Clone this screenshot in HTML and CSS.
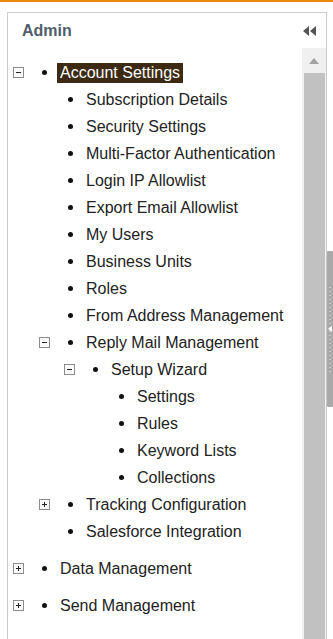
FILE: index.html
```html
<!DOCTYPE html>
<html lang="en">

<head>
    <meta charset="UTF-8">
    <meta name="viewport" content="width=device-width, initial-scale=1.0">
    <title>Admin</title>
    <link rel="stylesheet" href="styles.css">
</head>

<body>

    <div class="layout">
        <div class="panel">
            <div class="panel-header">
                <span class="panel-title">Admin</span>
                <svg class="collapse-icon" width="14" height="10" viewBox="0 0 14 10">
                    <polygon points="0,5 6,0 6,10" fill="#555"/>
                    <polygon points="7,5 13,0 13,10" fill="#555"/>
                </svg>
            </div>

            <div class="panel-body">
                <ul class="tree">
                    <li class="top">
                        <div class="row"><span class="slot"><span class="toggle minus"></span></span><span class="dot"></span><span class="label selected">Account Settings</span></div>
                        <ul>
                            <li><div class="row"><span class="slot"></span><span class="dot"></span><span class="label">Subscription Details</span></div></li>
                            <li><div class="row"><span class="slot"></span><span class="dot"></span><span class="label">Security Settings</span></div></li>
                            <li><div class="row"><span class="slot"></span><span class="dot"></span><span class="label">Multi-Factor Authentication</span></div></li>
                            <li><div class="row"><span class="slot"></span><span class="dot"></span><span class="label">Login IP Allowlist</span></div></li>
                            <li><div class="row"><span class="slot"></span><span class="dot"></span><span class="label">Export Email Allowlist</span></div></li>
                            <li><div class="row"><span class="slot"></span><span class="dot"></span><span class="label">My Users</span></div></li>
                            <li><div class="row"><span class="slot"></span><span class="dot"></span><span class="label">Business Units</span></div></li>
                            <li><div class="row"><span class="slot"></span><span class="dot"></span><span class="label">Roles</span></div></li>
                            <li><div class="row"><span class="slot"></span><span class="dot"></span><span class="label">From Address Management</span></div></li>
                            <li>
                                <div class="row"><span class="slot"><span class="toggle minus"></span></span><span class="dot"></span><span class="label">Reply Mail Management</span></div>
                                <ul>
                                    <li>
                                        <div class="row"><span class="slot"><span class="toggle minus"></span></span><span class="dot"></span><span class="label">Setup Wizard</span></div>
                                        <ul>
                                            <li><div class="row"><span class="slot"></span><span class="dot"></span><span class="label">Settings</span></div></li>
                                            <li><div class="row"><span class="slot"></span><span class="dot"></span><span class="label">Rules</span></div></li>
                                            <li><div class="row"><span class="slot"></span><span class="dot"></span><span class="label">Keyword Lists</span></div></li>
                                            <li><div class="row"><span class="slot"></span><span class="dot"></span><span class="label">Collections</span></div></li>
                                        </ul>
                                    </li>
                                </ul>
                            </li>
                            <li><div class="row"><span class="slot"><span class="toggle plus"></span></span><span class="dot"></span><span class="label">Tracking Configuration</span></div></li>
                            <li><div class="row"><span class="slot"></span><span class="dot"></span><span class="label">Salesforce Integration</span></div></li>
                        </ul>
                    </li>
                    <li class="top">
                        <div class="row"><span class="slot"><span class="toggle plus"></span></span><span class="dot"></span><span class="label">Data Management</span></div>
                    </li>
                    <li class="top">
                        <div class="row"><span class="slot"><span class="toggle plus"></span></span><span class="dot"></span><span class="label">Send Management</span></div>
                    </li>
                </ul>

                <div class="scrollbar">
                    <div class="scroll-up">
                        <svg width="10" height="6" viewBox="0 0 10 6"><polygon points="5,0 10,6 0,6" fill="#a3a3a3"/></svg>
                    </div>
                    <div class="scroll-thumb"></div>
                </div>
            </div>
        </div>

        <div class="splitter">
            <div class="splitter-handle">
                <span class="splitter-arrow"></span>
            </div>
        </div>
    </div>

</body>

</html>
```

FILE: styles.css
```css
html,
body {
    height: 100%;
}

body {
    margin: 0;
    overflow: hidden;
    background-color: #ffffff;
    border-top: 2px solid #e8880c;
    box-sizing: border-box;
    font-family: 'Liberation Sans', Arial, sans-serif;
    color: #222;
}

.layout {
    display: flex;
    height: calc(100% - 10px);
    margin-top: 10px;
    padding-left: 7px;
}

.panel {
    width: 320px;
    box-sizing: border-box;
    border: 1px solid #cccccc;
    border-bottom: none;
    display: flex;
    flex-direction: column;
}

.panel-header {
    height: 35px;
    flex: none;
    display: flex;
    align-items: center;
    justify-content: space-between;
    padding: 0 9px 0 14px;
}

.panel-title {
    font-size: 16px;
    font-weight: bold;
    color: #505d6b;
}

.collapse-icon {
    margin-top: 1px;
}

.panel-body {
    flex: 1;
    display: flex;
    min-height: 0;
}

/* tree */
.tree,
.tree ul {
    list-style: none;
    margin: 0;
    padding: 0;
}

.tree {
    flex: 1;
    padding: 11px 0 0 5px;
}

.tree ul {
    padding-left: 26px;
}

.tree ul ul {
    padding-left: 25px;
}

.tree ul ul ul {
    padding-left: 26px;
}

.tree .top {
    margin-bottom: 10px;
}

.row {
    display: flex;
    align-items: center;
    height: 27px;
    font-size: 16px;
    white-space: nowrap;
}

.slot {
    width: 29px;
    flex: none;
    display: flex;
    align-items: center;
}

.toggle {
    position: relative;
    width: 11px;
    height: 11px;
    box-sizing: border-box;
    border: 1px solid #8c8c8c;
    background-color: #fafafa;
}

.toggle::before,
.toggle::after {
    content: '';
    position: absolute;
    background-color: #222;
}

.toggle::before {
    left: 2px;
    top: 4px;
    width: 5px;
    height: 1px;
}

.toggle.plus::after {
    left: 4px;
    top: 2px;
    width: 1px;
    height: 5px;
}

.dot {
    width: 5px;
    height: 5px;
    border-radius: 50%;
    background-color: #111;
    flex: none;
}

.label {
    margin-left: 13px;
    line-height: 20px;
}

.label.selected {
    background-color: #3d2a12;
    color: #ffffff;
    padding: 0 3px;
    margin-left: 10px;
}

/* scrollbar */
.scrollbar {
    width: 24px;
    flex: none;
    background-color: #f0f0f0;
    display: flex;
    flex-direction: column;
}

.scroll-up {
    height: 25px;
    flex: none;
    display: flex;
    align-items: center;
    justify-content: center;
}

.scroll-thumb {
    flex: 1;
    margin: 0 1px 0 2px;
    background-color: #c1c1c1;
}

/* splitter */
.splitter {
    width: 6px;
    display: flex;
    align-items: center;
}

.splitter-handle {
    position: relative;
    width: 6px;
    height: 156px;
    margin-top: 6px;
    box-sizing: border-box;
    background-color: #a9a9a9;
    border-radius: 1px;
    background-image: repeating-linear-gradient(to bottom, #c9c9c9 0 1px, transparent 1px 4px);
    background-size: 2px 86px;
    background-repeat: no-repeat;
    background-position: 2px 36px;
}

.splitter-arrow {
    position: absolute;
    left: 1px;
    top: 75px;
    width: 0;
    height: 0;
    border-top: 3px solid transparent;
    border-bottom: 3px solid transparent;
    border-right: 4px solid #ffffff;
}
```
